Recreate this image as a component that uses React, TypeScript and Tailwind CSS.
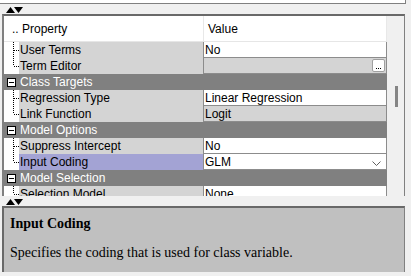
type Row =
  | { kind: 'cat'; label: string }
  | { kind: 'prop'; label: string; value: string; tree: 'mid' | 'last'; propBg?: string; valueBg?: string; button?: boolean; combo?: boolean }

const rows: Row[] = [
  { kind: 'prop', label: 'User Terms', value: 'No', tree: 'mid' },
  { kind: 'prop', label: 'Term Editor', value: '', tree: 'last', valueBg: 'bg-[#d4d4d4]', button: true },
  { kind: 'cat', label: 'Class Targets' },
  { kind: 'prop', label: 'Regression Type', value: 'Linear Regression', tree: 'mid' },
  { kind: 'prop', label: 'Link Function', value: 'Logit', tree: 'last', valueBg: 'bg-[#d4d4d4]' },
  { kind: 'cat', label: 'Model Options' },
  { kind: 'prop', label: 'Suppress Intercept', value: 'No', tree: 'mid' },
  { kind: 'prop', label: 'Input Coding', value: 'GLM', tree: 'last', propBg: 'bg-[#a3a3d4]', combo: true },
  { kind: 'cat', label: 'Model Selection' },
  { kind: 'prop', label: 'Selection Model', value: 'None', tree: 'last' },
]

function Arrows() {
  return (
    <svg width="17" height="6" viewBox="0 0 17 6" className="ml-[6px]">
      <polygon points="0,6 4.5,0 9,6" fill="#000" />
      <polygon points="8,0 17,0 12.5,6" fill="#000" />
    </svg>
  )
}

function TreeLines({ type }: { type: 'mid' | 'last' }) {
  return (
    <svg width="15" height="16" viewBox="0 0 15 16" className="shrink-0">
      <line x1="9.5" y1="0" x2="9.5" y2={type === 'mid' ? 16 : 8} stroke="#000" strokeDasharray="1 1" />
      <line x1="10" y1="8.5" x2="15" y2="8.5" stroke="#000" strokeDasharray="1 1" />
    </svg>
  )
}

function Minus() {
  return (
    <div className="w-[15px] h-[16px] flex items-center justify-center shrink-0">
      <div className="w-[9px] h-[9px] bg-white border border-black flex items-center justify-center">
        <div className="w-[5px] h-px bg-black" />
      </div>
    </div>
  )
}

function GridRow({ row }: { row: Row }) {
  if (row.kind === 'cat') {
    return (
      <div className="flex h-[16px] bg-[#808080] text-white items-center shrink-0">
        <Minus />
        <span className="pl-px leading-none">{row.label}</span>
      </div>
    )
  }
  return (
    <div className="flex h-[16px] shrink-0">
      <div className="bg-white">
        <TreeLines type={row.tree} />
      </div>
      <div className={`w-[184px] h-[16px] flex items-center pl-px ${row.propBg ?? 'bg-[#d4d4d4]'}`}>
        <span className="leading-none">{row.label}</span>
      </div>
      <div
        className={`flex-1 h-[16px] border-l border-b border-r border-[#8c8c8c] flex items-center pl-px relative ${row.valueBg ?? 'bg-white'}`}
      >
        <span className="leading-none">{row.value}</span>
        {row.button && (
          <div className="absolute right-[1px] top-[1px] w-[13px] h-[13px] bg-white border border-[#a0a0a0] rounded-[2px] flex items-end justify-center pb-[2px] gap-px">
            <div className="w-px h-px bg-black" />
            <div className="w-px h-px bg-black" />
            <div className="w-px h-px bg-black" />
          </div>
        )}
        {row.combo && (
          <svg width="9" height="5" viewBox="0 0 9 5" className="absolute right-[5px] top-[7px]">
            <polyline points="0.5,0.5 4.5,4.5 8.5,0.5" fill="none" stroke="#606060" />
          </svg>
        )}
      </div>
    </div>
  )
}

export default function App() {
  return (
    <div
      className="w-[411px] h-[276px] bg-[#f0f0f0] overflow-hidden flex flex-col text-[12px] text-black"
      style={{ fontFamily: '"Liberation Sans", Arial, sans-serif' }}
    >
      {/* top panel edge */}
      <div className="w-[406px] h-[4px] bg-white border-b border-r border-[#808080] shrink-0" />
      {/* splitter */}
      <div className="h-[10px] flex items-end pb-px shrink-0 w-[408px]">
        <Arrows />
      </div>

      {/* property grid */}
      <div className="ml-[2px] w-[403px] h-[182px] border-t-2 border-l-2 border-r border-t-[#696969] border-l-[#808080] border-r-[#808080] flex shrink-0 overflow-hidden">
        <div className="w-[383px] flex flex-col overflow-hidden bg-white">
          <div className="h-[26px] flex items-center border-b border-[#e6e6e6] shrink-0">
            <span className="w-[15px] pl-[8px] leading-none">..</span>
            <span className="w-[184px] pl-[3px]">Property</span>
            <span className="flex-1 h-full flex items-center border-l border-r border-[#e8e8e8] pl-[4px]">Value</span>
          </div>
          {rows.map((r, i) => (
            <GridRow key={i} row={r} />
          ))}
        </div>
        <div className="flex-1 bg-[#f0f0f0] relative">
          <div className="absolute left-[8px] top-[70px] w-[3px] h-[21px] bg-[#858585]" />
        </div>
      </div>

      {/* splitter */}
      <div className="h-[10px] flex items-end pb-[1px] shrink-0">
        <Arrows />
      </div>

      {/* description */}
      <div
        className="ml-[2px] w-[403px] h-[66px] bg-[#c0c0c0] border-t-2 border-l-2 border-r border-t-[#696969] border-l-[#696969] border-r-[#808080] pl-[6px] pt-[7px] shrink-0"
        style={{ fontFamily: '"Liberation Serif", "Times New Roman", serif' }}
      >
        <div className="text-[14px] font-bold leading-[18px]">Input Coding</div>
        <div className="text-[14px] leading-[18px] mt-[11px]">Specifies the coding that is used for class variable.</div>
      </div>
    </div>
  )
}
